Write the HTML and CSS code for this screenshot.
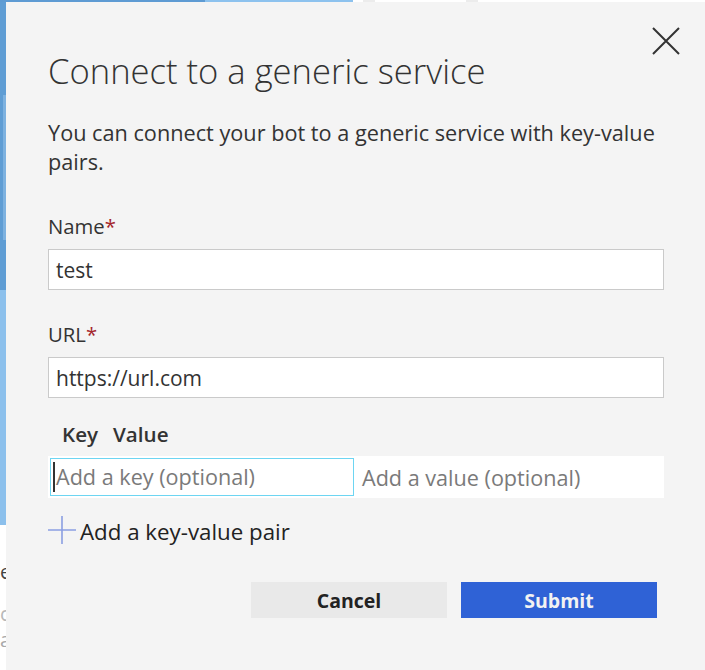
FILE: index.html
```html
<!DOCTYPE html>
<html lang="en">
<head>
<meta charset="utf-8">
<title>Connect to a generic service</title>
<link rel="stylesheet" href="styles.css">
</head>
<body>
<div class="app">
  <div class="app-top">
    <span class="seg seg-dark"></span>
    <span class="seg seg-light"></span>
    <span class="seg seg-white-a"></span>
    <span class="seg seg-grey"></span>
    <span class="seg seg-white-b"></span>
    <span class="seg seg-grey"></span>
    <span class="seg seg-white-c"></span>
  </div>
  <div class="app-side">
    <div class="side-dark">
      <div class="side-col"></div>
      <div class="side-col side-col-inner">
        <div class="side-hl"></div>
      </div>
    </div>
    <div class="side-light"></div>
    <div class="side-text">
      <span class="cut cut-e">e</span>
      <span class="cut cut-c">c</span>
      <span class="cut cut-a">a</span>
    </div>
  </div>
</div>

<div class="dialog" role="dialog" aria-labelledby="dlg-title">
  <button class="close" aria-label="Close">
    <svg viewBox="0 0 28 28" width="28" height="28" aria-hidden="true">
      <path d="M1 1 L27 27 M27 1 L1 27" fill="none" stroke="#333" stroke-width="2"/>
    </svg>
  </button>

  <h1 class="title" id="dlg-title">Connect to a generic service</h1>
  <p class="desc">You can connect your bot to a generic service with key-value pairs.</p>

  <div class="field">
    <label class="label">Name<span class="req">*</span></label>
    <div class="input">test</div>
  </div>

  <div class="field">
    <label class="label">URL<span class="req">*</span></label>
    <div class="input">https://url.com</div>
  </div>

  <div class="kv-head">
    <span>Key</span>
    <span>Value</span>
  </div>
  <div class="kv-row">
    <div class="kv-key"><span class="caret"></span><span class="ph">Add a key (optional)</span></div>
    <div class="kv-value"><span class="ph">Add a value (optional)</span></div>
  </div>

  <button class="add-pair">
    <svg class="plus" viewBox="0 0 28 28" width="28" height="28" aria-hidden="true">
      <path d="M14 0 V28 M0 14 H28" fill="none" stroke="#8b9fe2" stroke-width="1.6"/>
    </svg>
    <span class="add-text">Add a key-value pair</span>
  </button>

  <div class="actions">
    <button class="btn btn-cancel">Cancel</button>
    <button class="btn btn-submit">Submit</button>
  </div>
</div>
</body>
</html>
```

FILE: styles.css
```css
* { box-sizing: border-box; }

html, body {
  margin: 0;
  padding: 0;
}

body {
  width: 705px;
  height: 670px;
  position: relative;
  overflow: hidden;
  background: #ffffff;
  font-family: "Open Sans", "Noto Sans", sans-serif;
  color: #333333;
}

/* ---------- background application (behind the dialog) ---------- */
.app {
  display: flex;
  flex-direction: column;
  height: 100%;
}

.app-top {
  display: flex;
  height: 2px;
}

.seg { display: block; height: 2px; }
.seg-dark { width: 205px; background: #5e9bd3; }
.seg-light { width: 148px; background: #8dc2ee; }
.seg-white-a { width: 10px; background: #ffffff; }
.seg-grey { width: 12px; background: #ececec; }
.seg-white-b { width: 91px; background: #ffffff; }
.seg-white-c { flex: 1; background: #ffffff; }

.app-side {
  width: 40px;
  flex: 1;
  display: flex;
  flex-direction: column;
}

.side-dark {
  width: 6px;
  height: 288px;
  display: flex;
  background: #5f9dd4;
}

.side-col { width: 3px; }
.side-col-inner { padding-top: 93px; }
.side-hl { height: 145px; background: #7eb2e0; }

.side-light { width: 6px; height: 235px; background: #8cc0ec; }

.side-text {
  display: flex;
  flex-direction: column;
  font-size: 20px;
  line-height: 26px;
  padding-top: 34px;
}

.cut { display: block; }
.cut-e { color: #444; }
.cut-c { color: #b8b8b8; margin-top: 16px; }
.cut-a { color: #a9a9a9; }

/* ---------- dialog ---------- */
.dialog {
  position: absolute;
  left: 6px;
  top: 2px;
  right: 0;
  bottom: 0;
  background: #f4f4f4;
  padding: 49px 41px 0 42px;
}

.close {
  position: absolute;
  top: 25px;
  right: 25px;
  width: 28px;
  height: 28px;
  padding: 0;
  border: 0;
  background: transparent;
  display: flex;
}

.title {
  margin: 0;
  font-size: 34.6px;
  font-weight: 300;
  line-height: 40px;
  color: #333333;
}

.desc {
  margin: 27px 0 36px;
  font-size: 21.7px;
  line-height: 29px;
  color: #333333;
}

.field { display: flex; flex-direction: column; }
.field + .field { margin-top: 30px; }

.label {
  font-size: 20.3px;
  line-height: 28px;
  margin-bottom: 9px;
  color: #333333;
}

.req { color: #a4262c; }

.input {
  height: 41px;
  border: 1.5px solid #cacaca;
  background: #ffffff;
  padding: 0 7px;
  font-size: 21px;
  line-height: 40px;
  color: #333333;
}

.kv-head {
  margin-top: 22px;
  padding-left: 14px;
  display: flex;
  gap: 15px;
  font-size: 20.6px;
  font-weight: 600;
  line-height: 28px;
  color: #333333;
}

.kv-row {
  margin-top: 8px;
  height: 42px;
  background: #ffffff;
  display: flex;
  align-items: center;
  padding-left: 2px;
}

.kv-key {
  width: 304px;
  height: 38px;
  border: 1.5px solid #6dd5f2;
  display: flex;
  align-items: flex-start;
  padding: 3px 0 0 2px;
}

.caret {
  display: block;
  flex: none;
  width: 2px;
  height: 30px;
  background: #333333;
  margin-right: 1px;
}

.kv-value {
  flex: 1;
  height: 38px;
  padding: 4.5px 0 0 8px;
  display: flex;
  align-items: flex-start;
}

.ph {
  font-size: 21.6px;
  line-height: 30px;
  color: #7a7a7a;
  white-space: nowrap;
}

.add-pair {
  margin-top: 18px;
  display: flex;
  align-items: center;
  gap: 4px;
  padding: 0;
  border: 0;
  background: transparent;
  font-family: inherit;
  font-size: 22.3px;
  color: #222222;
  height: 28px;
}

.add-text { padding-top: 3px; }

.plus { flex: none; }

.actions {
  margin-top: 38px;
  display: flex;
  justify-content: flex-end;
  gap: 14px;
  padding-right: 7px;
}

.btn {
  width: 196px;
  height: 36px;
  border: 0;
  font-family: inherit;
  font-size: 19.5px;
  font-weight: 700;
  padding: 0;
}

.btn-cancel { background: #e9e9e9; color: #222222; }
.btn-submit { background: #2f62d6; color: #f2f2f2; }
```
